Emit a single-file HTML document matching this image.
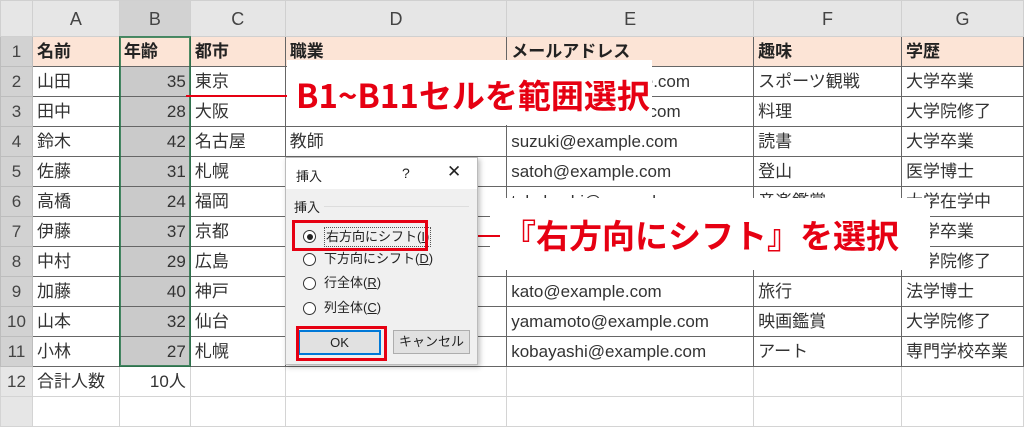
<!DOCTYPE html>
<html><head><meta charset="utf-8"><style>
*{margin:0;padding:0;box-sizing:border-box}
body{width:1024px;height:404px;overflow:hidden;background:#fff;font-family:"Liberation Sans","Noto Sans CJK JP",sans-serif;position:relative}
table{border-collapse:collapse;table-layout:fixed;position:absolute;left:0;top:0}
td{height:30px;border:1px solid #666;font-size:17px;color:#333;padding:0 4px;white-space:nowrap;overflow:hidden;line-height:28px}
tr.h td{height:36px;background:#e6e6e6;border:1px solid #d0d0d0;text-align:center;font-size:18px;color:#444}
td.rh{background:#d2d2d2;border:1px solid #bdbdbd;text-align:center;color:#444;padding:0}
td.rh2{background:#e6e6e6;border:1px solid #d0d0d0;text-align:center;color:#444;padding:0}
tr.r1 td{background:#fce4d6;font-weight:bold;color:#222}
tr.r1 td.rh{background:#d2d2d2;font-weight:normal;color:#444}
td.b{background:#cacaca;text-align:right}
td.n{text-align:right}
tr.r12 td{border-color:#d4d4d4}
tr.r13 td{border-color:#d4d4d4}
.sel{position:absolute;left:119px;top:36px;width:72px;height:331px;border:2px solid #217346;opacity:.8}
.box{position:absolute;background:#fff}
.red{color:#e60012;font-weight:bold;font-family:"Noto Sans CJK JP",sans-serif;white-space:nowrap}
.line{position:absolute;height:2px;background:#e60012}
.dlg{position:absolute;left:285px;top:157px;width:193px;height:208px;background:#f0f0f0;border:1px solid #bbb;box-shadow:2px 2px 5px rgba(0,0,0,.25);font-size:13px;color:#222}
.dlg .t{height:31px;background:#fff;position:relative}
.rad{position:absolute;left:17px;width:13px;height:13px;border:1px solid #333;border-radius:50%;background:#fff}
.lab{position:absolute;left:38px;line-height:18px}
</style></head><body>
<table>
<colgroup><col style="width:32px"><col style="width:87px"><col style="width:71px"><col style="width:95px"><col style="width:222px"><col style="width:247px"><col style="width:148px"><col style="width:122px"></colgroup>
<tr class="h"><td style="background:#e6e6e6"></td><td>A</td><td style="background:#d2d2d2">B</td><td>C</td><td>D</td><td>E</td><td>F</td><td>G</td></tr>
<tr class="r1"><td class="rh">1</td><td>名前</td><td>年齢</td><td>都市</td><td>職業</td><td>メールアドレス</td><td>趣味</td><td>学歴</td></tr>
<tr><td class="rh">2</td><td>山田</td><td class="b">35</td><td>東京</td><td></td><td>yamada@example.com</td><td>スポーツ観戦</td><td>大学卒業</td></tr>
<tr><td class="rh">3</td><td>田中</td><td class="b">28</td><td>大阪</td><td></td><td>tanaka@example.com</td><td>料理</td><td>大学院修了</td></tr>
<tr><td class="rh">4</td><td>鈴木</td><td class="b">42</td><td>名古屋</td><td>教師</td><td>suzuki@example.com</td><td>読書</td><td>大学卒業</td></tr>
<tr><td class="rh">5</td><td>佐藤</td><td class="b">31</td><td>札幌</td><td></td><td>satoh@example.com</td><td>登山</td><td>医学博士</td></tr>
<tr><td class="rh">6</td><td>高橋</td><td class="b">24</td><td>福岡</td><td></td><td>takahashi@example.com</td><td>音楽鑑賞</td><td>大学在学中</td></tr>
<tr><td class="rh">7</td><td>伊藤</td><td class="b">37</td><td>京都</td><td></td><td></td><td></td><td>大学卒業</td></tr>
<tr><td class="rh">8</td><td>中村</td><td class="b">29</td><td>広島</td><td></td><td></td><td></td><td>大学院修了</td></tr>
<tr><td class="rh">9</td><td>加藤</td><td class="b">40</td><td>神戸</td><td></td><td>kato@example.com</td><td>旅行</td><td>法学博士</td></tr>
<tr><td class="rh">10</td><td>山本</td><td class="b">32</td><td>仙台</td><td></td><td>yamamoto@example.com</td><td>映画鑑賞</td><td>大学院修了</td></tr>
<tr><td class="rh">11</td><td>小林</td><td class="b">27</td><td>札幌</td><td>―</td><td>kobayashi@example.com</td><td>アート</td><td>専門学校卒業</td></tr>
<tr class="r12"><td class="rh2">12</td><td>合計人数</td><td class="n">10人</td><td></td><td></td><td></td><td></td><td></td></tr>
<tr class="r13"><td class="rh2"></td><td></td><td></td><td></td><td></td><td></td><td></td><td></td></tr>
</table>
<div class="sel"></div>
<div class="line" style="left:186px;top:95px;width:102px"></div>
<div class="box" style="left:287px;top:60px;width:365px;height:65px"></div>
<div class="red" style="position:absolute;left:296px;top:72px;font-size:33px;line-height:44px">B1~B11セルを範囲選択</div>
<div class="box" style="left:490px;top:198px;width:440px;height:72px"></div>
<div class="line" style="left:425px;top:235px;width:75px"></div>
<div class="red" style="position:absolute;left:503px;top:211px;font-size:33px;line-height:46px">『右方向にシフト』を選択</div>
<div class="dlg">
 <div class="t"><span style="position:absolute;left:10px;top:8px">挿入</span><span style="position:absolute;left:116px;top:7px;font-size:14px">?</span><span style="position:absolute;left:161px;top:4px;font-size:17px">✕</span></div>
 <div style="position:absolute;left:8px;top:39px">挿入</div>
 <div style="position:absolute;left:38px;top:48px;width:145px;height:1px;background:#ddd"></div>
 <div class="rad" style="top:72px"><div style="position:absolute;left:2.5px;top:2.5px;width:6px;height:6px;border-radius:50%;background:#222"></div></div>
 <div class="lab" style="top:69px;border:1px dotted #555;padding:0 1px">右方向にシフト(<u>I</u>)</div>
 <div class="rad" style="top:95px"></div><div class="lab" style="top:92px">下方向にシフト(<u>D</u>)</div>
 <div class="rad" style="top:119px"></div><div class="lab" style="top:116px">行全体(<u>R</u>)</div>
 <div class="rad" style="top:144px"></div><div class="lab" style="top:141px">列全体(<u>C</u>)</div>
 <div style="position:absolute;left:6px;top:62px;width:136px;height:31px;border:3px solid #e60012"></div>
 <div style="position:absolute;left:12px;top:172px;width:83px;height:25px;background:#e1e1e1;border:2px solid #0078d7;text-align:center;line-height:21px">OK</div>
 <div style="position:absolute;left:10px;top:168px;width:91px;height:35px;border:3px solid #e60012"></div>
 <div style="position:absolute;left:107px;top:172px;width:77px;height:24px;background:#e1e1e1;border:1px solid #adadad;text-align:center;line-height:22px">キャンセル</div>
</div>
</body></html>
